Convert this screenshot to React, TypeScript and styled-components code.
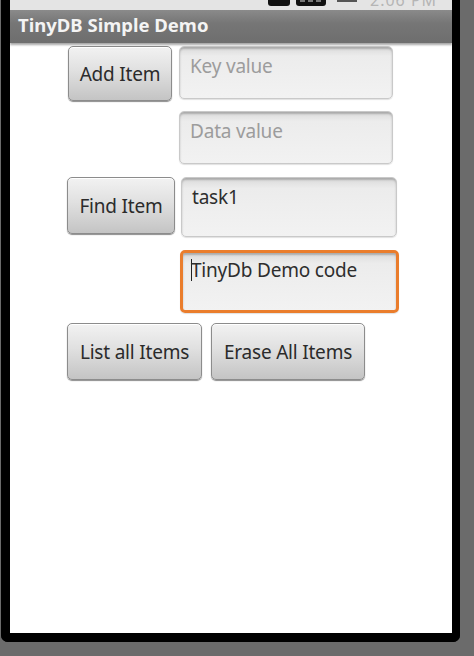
import styled, { createGlobalStyle } from 'styled-components';

const GlobalStyle = createGlobalStyle`
    html, body {
        margin: 0;
        padding: 0;
        background: #6b6b6b;
    }

    body {
        font-family: 'Noto Sans', 'Open Sans', 'DejaVu Sans', sans-serif;
    }
`;

interface RowProps {
    $top: number;
    $indent: number;
    $gap?: number;
}

interface SizeProps {
    $w: number;
    $h: number;
}

interface FieldProps extends SizeProps {
    $focused?: boolean;
}

export default function App() {
    return (
        <Page>
            <GlobalStyle />
            <Device>
                <StatusBar>
                    <SignalIcon />
                    <BatteryIcon>
                        <i /><i /><i />
                    </BatteryIcon>
                    <NotifyBar />
                    <Clock>2:06 PM</Clock>
                </StatusBar>

                <TitleBar>TinyDB Simple Demo</TitleBar>

                <Content>
                    <Row $top={3} $indent={58} $gap={7}>
                        <Button $w={104} $h={55}>Add Item</Button>
                        <Field $w={214} $h={53}>
                            <Hint>Key value</Hint>
                        </Field>
                    </Row>

                    <Row $top={10} $indent={169}>
                        <Field $w={214} $h={53}>
                            <Hint>Data value</Hint>
                        </Field>
                    </Row>

                    <Row $top={13} $indent={57} $gap={6}>
                        <Button $w={108} $h={57}>Find Item</Button>
                        <Field $w={216} $h={60}>
                            <Value>task1</Value>
                        </Field>
                    </Row>

                    <Row $top={13} $indent={170}>
                        <Field $w={219} $h={63} $focused>
                            <Value>
                                <Caret />TinyDb Demo code
                            </Value>
                        </Field>
                    </Row>

                    <Row $top={10} $indent={57} $gap={9}>
                        <Button $w={135} $h={57}>List all Items</Button>
                        <Button $w={154} $h={57}>Erase All Items</Button>
                    </Row>
                </Content>
            </Device>
        </Page>
    )
}

const Page = styled.div`
    width: 474px;
    height: 656px;
    overflow: hidden;
    background: #6b6b6b;
`;

const Device = styled.div`
    box-sizing: border-box;
    margin-left: 1px;
    width: 459px;
    height: 642px;
    border: 9px solid #000;
    border-top: none;
    border-right-width: 8px;
    border-radius: 0 0 7px 7px;
    background: #fff;
    display: flex;
    flex-direction: column;
    overflow: hidden;
`;

const StatusBar = styled.div`
    height: 10px;
    flex-shrink: 0;
    background: #e4e4e4;
    display: flex;
    align-items: flex-end;
    padding-left: 258px;
    padding-bottom: 4px;
    box-sizing: border-box;
    overflow: hidden;
`;

const SignalIcon = styled.div`
    width: 22px;
    height: 7px;
    background: #111;
    border-radius: 0 0 3px 3px;
`;

const BatteryIcon = styled.div`
    margin-left: 6px;
    width: 30px;
    height: 7px;
    background: #111;
    border-radius: 0 0 3px 3px;
    display: flex;
    gap: 3px;
    align-items: flex-start;
    padding: 0 4px;
    box-sizing: border-box;

    i {
        display: block;
        width: 5px;
        height: 3px;
        background: #777;
    }
`;

const NotifyBar = styled.div`
    margin-left: 11px;
    width: 20px;
    height: 3px;
    margin-bottom: 4px;
    background: #555;
`;

const Clock = styled.div`
    margin-left: 13px;
    color: #b5b5b5;
    font-size: 16px;
    line-height: 12px;
    height: 6px;
    overflow: hidden;
    display: flex;
    align-items: flex-end;
    letter-spacing: 1px;
`;

const TitleBar = styled.div`
    height: 33px;
    flex-shrink: 0;
    box-sizing: border-box;
    padding-left: 8px;
    background: linear-gradient(#8a8a8a, #767676 40%, #6e6e6e);
    color: #f4f4f4;
    font-weight: 700;
    font-size: 18.5px;
    line-height: 30px;
    box-shadow: 0 2px 2px rgba(0, 0, 0, 0.35);
    position: relative;
    z-index: 1;
`;

const Content = styled.div`
    flex: 1;
    display: flex;
    flex-direction: column;
`;

const Row = styled.div<RowProps>`
    display: flex;
    align-items: flex-start;
    gap: ${p => p.$gap ?? 0}px;
    margin-top: ${p => p.$top}px;
    padding-left: ${p => p.$indent}px;
`;

const Button = styled.div<SizeProps>`
    box-sizing: border-box;
    width: ${p => p.$w}px;
    height: ${p => p.$h}px;
    display: flex;
    align-items: center;
    justify-content: center;
    border: 1px solid #8c8c8c;
    border-radius: 5px;
    background: linear-gradient(#f2f2f2, #e0e0e0 45%, #c4c4c4);
    box-shadow: 0 1px 1px rgba(0, 0, 0, 0.45), inset 0 1px 0 #fff;
    color: #2b2b2b;
    font-size: 19px;
    letter-spacing: -0.2px;
    white-space: nowrap;
`;

const Field = styled.div<FieldProps>`
    box-sizing: border-box;
    width: ${p => p.$w}px;
    height: ${p => p.$h}px;
    padding: ${p => (p.$focused ? '5px 8px' : '7px 10px')};
    border: ${p => (p.$focused ? '3px solid #ea7d2c' : '1px solid #c9c9c9')};
    border-radius: 5px;
    background: linear-gradient(#dadada, #ececec 18%, #f2f2f2);
    box-shadow: inset 0 2px 2px rgba(0, 0, 0, 0.22), 0 1px 1px rgba(0, 0, 0, 0.12);
    font-size: 19px;
    letter-spacing: -0.2px;
    line-height: 24px;
    white-space: nowrap;
`;

const Hint = styled.span`
    color: #9c9c9c;
`;

const Value = styled.span`
    color: #2e2e2e;
    display: inline-flex;
    align-items: center;
`;

const Caret = styled.span`
    display: inline-block;
    width: 1px;
    height: 22px;
    background: #222;
    margin-right: -1px;
`;
